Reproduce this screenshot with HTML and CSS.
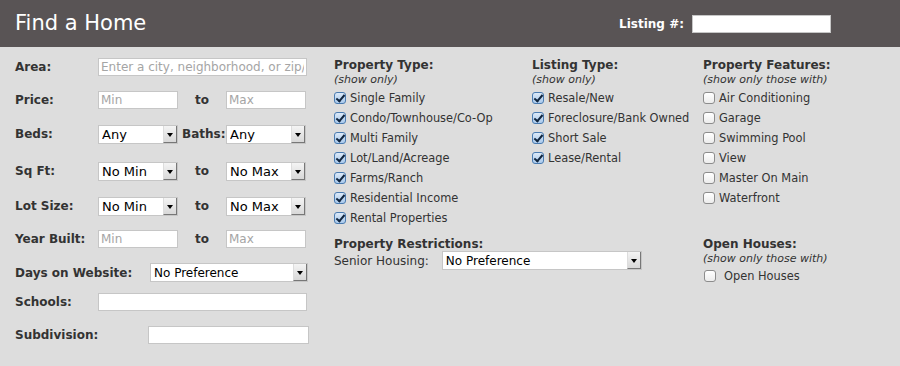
FILE: index.html
```html
<html lang="en">
<head>
    <meta charset="UTF-8">
    <title>Find a Home</title>
    <link rel="stylesheet" href="styles.css">
</head>
<body>

    <div class="header">
        <h1 class="title">Find a Home</h1>
        <div class="listing">
            <label for="listingNo">Listing #:</label>
            <input type="text" id="listingNo" class="txt listing-input">
        </div>
    </div>

    <form class="search" autocomplete="off">

        <!-- left column -->
        <div class="fields">
            <div class="row">
                <label class="lbl">Area:</label>
                <input type="text" class="txt area" placeholder="Enter a city, neighborhood, or zip/code">
            </div>
            <div class="row">
                <label class="lbl">Price:</label>
                <input type="text" class="txt small" placeholder="Min">
                <span class="to">to</span>
                <input type="text" class="txt small" placeholder="Max">
            </div>
            <div class="row row-beds">
                <label class="lbl">Beds:</label>
                <div class="sel small"><select><option>Any</option></select></div>
                <label class="baths">Baths:</label>
                <div class="sel small"><select><option>Any</option></select></div>
            </div>
            <div class="row row-sq">
                <label class="lbl">Sq Ft:</label>
                <div class="sel small"><select><option>No Min</option></select></div>
                <span class="to">to</span>
                <div class="sel small"><select><option>No Max</option></select></div>
            </div>
            <div class="row">
                <label class="lbl">Lot Size:</label>
                <div class="sel small"><select><option>No Min</option></select></div>
                <span class="to">to</span>
                <div class="sel small"><select><option>No Max</option></select></div>
            </div>
            <div class="row">
                <label class="lbl">Year Built:</label>
                <input type="text" class="txt small" placeholder="Min">
                <span class="to">to</span>
                <input type="text" class="txt small" placeholder="Max">
            </div>
            <div class="row row-days">
                <label class="lbl lbl-wide">Days on Website:</label>
                <div class="sel days"><select><option>No Preference</option></select></div>
            </div>
            <div class="row row-schools">
                <label class="lbl">Schools:</label>
                <input type="text" class="txt area">
            </div>
            <div class="row">
                <label class="lbl lbl-sub">Subdivision:</label>
                <input type="text" class="txt sub">
            </div>
        </div>

        <!-- right side -->
        <div class="groups">
            <div class="group">
                <h3>Property Type:</h3>
                <p class="hint">(show only)</p>
                <label class="chk"><input type="checkbox" checked> Single Family</label>
                <label class="chk"><input type="checkbox" checked> Condo/Townhouse/Co-Op</label>
                <label class="chk"><input type="checkbox" checked> Multi Family</label>
                <label class="chk"><input type="checkbox" checked> Lot/Land/Acreage</label>
                <label class="chk"><input type="checkbox" checked> Farms/Ranch</label>
                <label class="chk"><input type="checkbox" checked> Residential Income</label>
                <label class="chk"><input type="checkbox" checked> Rental Properties</label>
            </div>
            <div class="group">
                <h3>Listing Type:</h3>
                <p class="hint">(show only)</p>
                <label class="chk"><input type="checkbox" checked> Resale/New</label>
                <label class="chk"><input type="checkbox" checked> Foreclosure/Bank Owned</label>
                <label class="chk"><input type="checkbox" checked> Short Sale</label>
                <label class="chk"><input type="checkbox" checked> Lease/Rental</label>
            </div>
            <div class="group">
                <h3>Property Features:</h3>
                <p class="hint">(show only those with)</p>
                <label class="chk"><input type="checkbox"> Air Conditioning</label>
                <label class="chk"><input type="checkbox"> Garage</label>
                <label class="chk"><input type="checkbox"> Swimming Pool</label>
                <label class="chk"><input type="checkbox"> View</label>
                <label class="chk"><input type="checkbox"> Master On Main</label>
                <label class="chk"><input type="checkbox"> Waterfront</label>
            </div>

            <div class="group restrict">
                <h3>Property Restrictions:</h3>
                <div class="senior">
                    <span>Senior Housing:</span>
                    <div class="sel senior-sel"><select><option>No Preference</option></select></div>
                </div>
            </div>
            <div class="group open-group">
                <h3>Open Houses:</h3>
                <p class="hint">(show only those with)</p>
                <label class="chk open"><input type="checkbox"> Open Houses</label>
            </div>
        </div>

    </form>

</body>
</html>
```

FILE: styles.css
```css
body{
    margin: 0;
    background: #dddddd;
    font-family: "DejaVu Sans", Verdana, sans-serif;
    font-size: 12px;
    color: #333;
}
.header{
    height: 47px;
    background: #595455;
    display: flex;
    align-items: center;
    justify-content: space-between;
    padding: 0 69px 0 15px;
}
.header .title{
    margin: 0 0 2px;
    font-size: 21px;
    font-weight: normal;
    color: #fff;
}
.listing{
    display: flex;
    align-items: center;
    gap: 8px;
    color: #fff;
    font-weight: bold;
    font-size: 12px;
}
.txt{
    height: 18px;
    box-sizing: border-box;
    border: 1px solid #c6c6c6;
    background: #fff;
    font-family: inherit;
    font-size: 12px;
    padding: 0 2px;
    outline: none;
}
.txt::placeholder{color: #a5a5a5;}
.listing-input{width: 139px;}

.search{
    display: flex;
    align-items: flex-start;
    padding: 11px 0 0 15px;
}
.fields{width: 319px;}
.row{
    display: flex;
    align-items: center;
    height: 18px;
    margin-bottom: 15px;
}
.row-beds{height: 20px; margin-bottom: 18px;}
.row-sq{margin-bottom: 17px;}
.row-days{height: 19px; margin-bottom: 11px;}
.row-schools{margin-bottom: 15px;}
.lbl{
    width: 83px;
    font-weight: bold;
    flex: none;
}
.lbl-wide{width: 135px;}
.lbl-sub{width: 133px;}
.area{width: 209px;}
.small{width: 80px;}
.sub{width: 161px;}
.to{
    width: 48px;
    box-sizing: border-box;
    padding-left: 17px;
    font-weight: bold;
}
.baths{
    width: 48px;
    box-sizing: border-box;
    padding-left: 4px;
    font-weight: bold;
}

/* fake mac style select */
.sel{
    position: relative;
    height: 19px;
    box-sizing: border-box;
    border: 1px solid #c6c6c6;
    background: #fff;
}
.sel select{
    appearance: none;
    -webkit-appearance: none;
    border: none;
    background: transparent;
    width: 100%;
    height: 100%;
    font-family: inherit;
    font-size: 13px;
    color: #000;
    padding: 0 0 0 3px;
    outline: none;
}
.sel::after{
    content: "";
    position: absolute;
    right: 0;
    top: 0;
    bottom: 0;
    width: 14px;
    background: linear-gradient(#f4f4f4, #d8d8d8);
    border-left: 1px solid #ddd;
    border-right: 1px solid #777;
    border-bottom: 1px solid #777;
    box-sizing: border-box;
}
.sel::before{
    content: "";
    position: absolute;
    right: 4px;
    top: 7px;
    border-left: 3px solid transparent;
    border-right: 3px solid transparent;
    border-top: 4px solid #000;
    z-index: 1;
}
.days{width: 158px;}
.senior-sel{width: 200px;}
.senior-sel select, .days select{font-size: 12px;}

/* checkbox groups */
.groups{
    display: grid;
    grid-template-columns: 198px 171px auto;
    align-content: start;
    font-size: 11.4px;
}
.group h3{
    margin: 0;
    font-size: 12px;
    font-weight: bold;
    line-height: 15px;
}
.hint{
    margin: 0 0 2px;
    font-size: 11px;
    font-style: italic;
    line-height: 13px;
}
.chk{
    display: flex;
    align-items: center;
    height: 20px;
    gap: 4px;
}
.chk input{
    appearance: none;
    -webkit-appearance: none;
    position: relative;
    width: 12px;
    height: 12px;
    margin: 0;
    border: 1px solid #8c8c8c;
    border-radius: 3px;
    background: linear-gradient(#fff, #ececec);
    flex: none;
}
.chk input:checked{
    border-color: #4a7bb0;
    background: linear-gradient(#dbe9f8, #a9c9ec);
}
.chk input:checked::after{
    content: "";
    position: absolute;
    left: 3px;
    top: 0px;
    width: 3px;
    height: 7px;
    border-right: 2px solid #11263f;
    border-bottom: 2px solid #11263f;
    transform: rotate(40deg);
}
.open{gap: 8px;}
.open input{margin-left: 1px;}
.restrict{
    grid-column: span 2;
    margin-top: 9px;
}
.open-group{margin-top: 9px;}
.open-group .hint{margin-bottom: 1px;}
.senior{
    display: flex;
    align-items: center;
    gap: 13px;
    margin-top: -1px;
    font-size: 12px;
}
```
